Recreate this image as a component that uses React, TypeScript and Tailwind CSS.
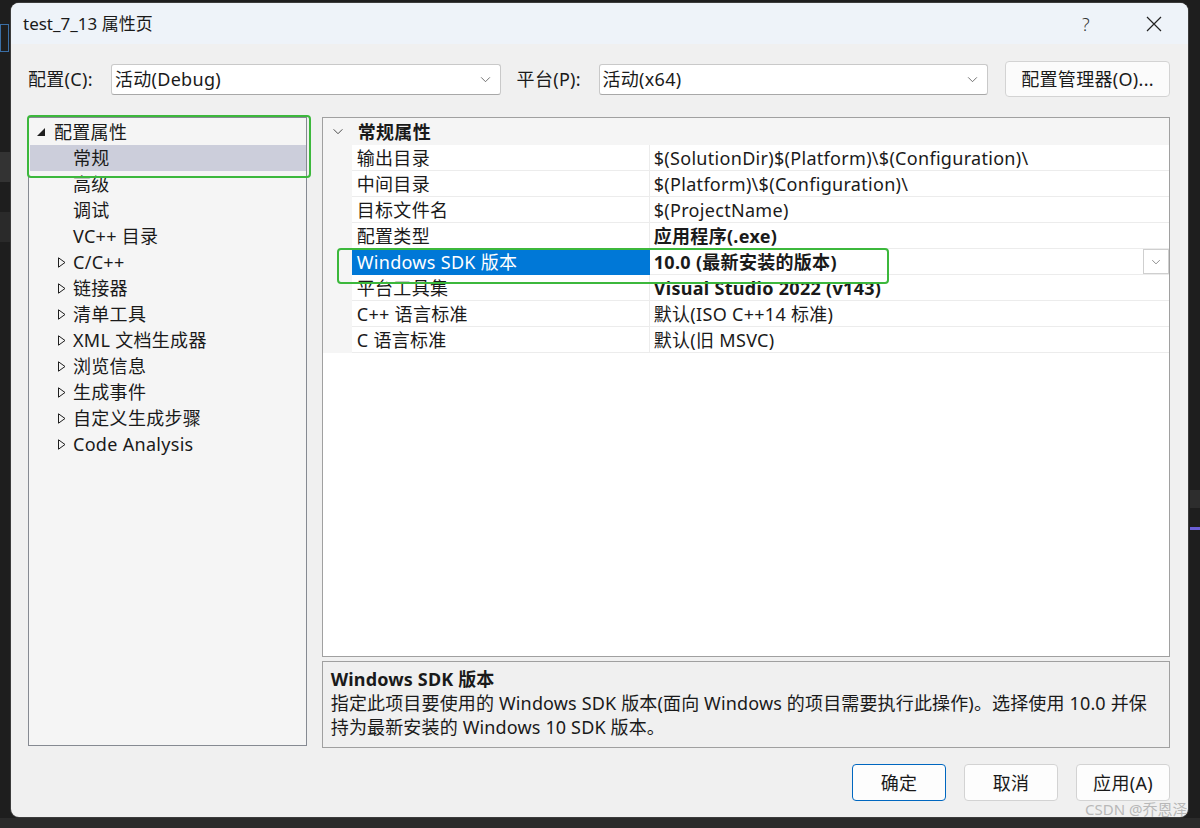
import React from "react";

type TreeItem = {
  label: string;
  kind: "root" | "leaf" | "group";
  selected?: boolean;
};

const tree: TreeItem[] = [
  { label: "配置属性", kind: "root" },
  { label: "常规", kind: "leaf", selected: true },
  { label: "高级", kind: "leaf" },
  { label: "调试", kind: "leaf" },
  { label: "VC++ 目录", kind: "leaf" },
  { label: "C/C++", kind: "group" },
  { label: "链接器", kind: "group" },
  { label: "清单工具", kind: "group" },
  { label: "XML 文档生成器", kind: "group" },
  { label: "浏览信息", kind: "group" },
  { label: "生成事件", kind: "group" },
  { label: "自定义生成步骤", kind: "group" },
  { label: "Code Analysis", kind: "group" },
];

type Prop = { name: string; value: string; bold?: boolean; selected?: boolean };

const props: Prop[] = [
  { name: "输出目录", value: "$(SolutionDir)$(Platform)\\$(Configuration)\\" },
  { name: "中间目录", value: "$(Platform)\\$(Configuration)\\" },
  { name: "目标文件名", value: "$(ProjectName)" },
  { name: "配置类型", value: "应用程序(.exe)", bold: true },
  { name: "Windows SDK 版本", value: "10.0 (最新安装的版本)", bold: true, selected: true },
  { name: "平台工具集", value: "Visual Studio 2022 (v143)", bold: true },
  { name: "C++ 语言标准", value: "默认(ISO C++14 标准)" },
  { name: "C 语言标准", value: "默认(旧 MSVC)" },
];

function Chevron({ className }: { className?: string }) {
  return (
    <svg viewBox="0 0 12 8" className={className} fill="none" stroke="currentColor" strokeWidth="1">
      <path d="M1 1.5 L6 6.5 L11 1.5" />
    </svg>
  );
}

function Select({ value }: { value: string }) {
  return (
    <div className="flex h-[31px] w-[390px] items-center justify-between rounded-[3px] border border-[#c9c9c9] border-b-[#a8a8a8] bg-white pl-[3px] pr-[9px]">
      <span>{value}</span>
      <Chevron className="h-[7px] w-[11px] text-[#5f5f5f]" />
    </div>
  );
}

function Button({ label, primary }: { label: string; primary?: boolean }) {
  return (
    <div
      className={
        "flex h-[37px] w-[94px] items-center justify-center rounded-[4px] border bg-[#fdfdfd] " +
        (primary ? "border-[#0067c0]" : "border-[#d3d3d3]")
      }
    >
      {label}
    </div>
  );
}

function TreeRow({ item }: { item: TreeItem }) {
  if (item.kind === "root") {
    return (
      <div className="flex h-[26px] items-center pl-[8px]">
        <svg viewBox="0 0 8 8" className="mr-[9px] h-[8px] w-[8px]">
          <path d="M8 0 L8 8 L0 8 Z" fill="#1e1e1e" />
        </svg>
        <span>{item.label}</span>
      </div>
    );
  }
  return (
    <div
      className={
        "ml-[1px] flex h-[26px] items-center pl-[28px] " + (item.selected ? "bg-[#cccedb]" : "")
      }
    >
      <span className="flex w-[15px] items-center">
        {item.kind === "group" && (
          <svg viewBox="0 0 8 11" className="h-[11px] w-[8px]">
            <path d="M0.5 0.8 L7 5.5 L0.5 10.2 Z" fill="none" stroke="#1e1e1e" strokeWidth="1" />
          </svg>
        )}
      </span>
      <span>{item.label}</span>
    </div>
  );
}

function PropRow({ p }: { p: Prop }) {
  return (
    <div className="flex h-[26px]">
      <div className="w-[29px] bg-[#f5f5f5]" />
      <div
        className={
          "flex w-[298px] items-center border-b border-r pl-[5px] " +
          (p.selected ? "border-[#0078d7] bg-[#0078d7] text-white" : "border-[#ececec] bg-white")
        }
      >
        {p.name}
      </div>
      <div className="flex flex-1 items-center justify-between border-b border-[#ececec] bg-white pl-[4px]">
        <span className={p.bold ? "font-bold" : ""}>{p.value}</span>
        {p.selected && (
          <div className="flex h-[25px] w-[26px] items-center justify-center border border-[#cfcfcf] bg-white">
            <Chevron className="h-[6px] w-[10px] text-[#6a6a6a]" />
          </div>
        )}
      </div>
    </div>
  );
}

export default function App() {
  return (
    <div className="relative h-[828px] w-[1200px] overflow-hidden bg-[#1e1e1e] font-['Noto_Sans','Noto_Sans_CJK_SC',sans-serif] text-[18px] leading-none tracking-[0.3px] text-[#1a1a1a]">
      {/* editor background peeking out */}
      <div className="absolute left-0 top-[24px] h-[28px] w-[9px] border border-[#3a6ea5]" />
      <div className="absolute left-0 top-[152px] h-[30px] w-[10px] bg-[#333333]" />
      <div className="absolute left-0 top-[212px] h-[30px] w-[10px] bg-[#2a2a2a]" />
      <div className="absolute right-0 top-[490px] h-[18px] w-[10px] bg-[#2d2d2d]" />
      <div className="absolute right-0 top-[527px] h-[3px] w-[10px] bg-[#6b5fd6]" />
      <div className="absolute bottom-0 left-0 h-[10px] w-full bg-[#2b2b2b]" />

      <div className="relative pl-[11px] pt-[3px]">
        <div className="flex h-[814px] w-[1177px] flex-col overflow-hidden rounded-[8px] bg-[#f0f0f0] shadow-[0_0_0_1px_#3c3c3c]">
          {/* title bar */}
          <div className="flex h-[41px] items-center justify-between bg-[#eef3f9] pl-[12px]">
            <span className="text-[17px] tracking-normal">test_7_13 属性页</span>
            <div className="flex items-center">
              <span className="mr-[56px] text-[18px] font-light text-[#333]">?</span>
              <svg viewBox="0 0 16 16" className="mr-[26px] h-[16px] w-[16px]" stroke="#222" strokeWidth="1.2">
                <path d="M1 1 L15 15 M15 1 L1 15" />
              </svg>
            </div>
          </div>

          {/* body */}
          <div className="flex flex-1 flex-col pl-[17px] pr-[18px] pt-[17px]">
            {/* configuration row */}
            <div className="flex h-[36px] items-center">
              <span className="w-[83px]">配置(C):</span>
              <Select value="活动(Debug)" />
              <span className="ml-[16px] w-[82px]">平台(P):</span>
              <Select value="活动(x64)" />
              <div className="ml-[17px] flex h-[36px] w-[165px] items-center justify-center rounded-[4px] border border-[#d3d3d3] bg-[#fbfbfb]">
                配置管理器(O)...
              </div>
            </div>

            {/* main area */}
            <div className="mt-[20px] flex gap-[15px]">
              <div className="relative h-[629px] w-[279px] border border-[#868a92] bg-[#f5f5f5] pt-[1px]">
                {tree.map((t) => (
                  <TreeRow key={t.label} item={t} />
                ))}
              </div>

              <div className="flex w-[849px] flex-col">
                <div className="h-[540px] border border-[#a0a0a0] bg-white">
                  <div className="flex h-[27px] items-center bg-[#f5f5f5]">
                    <Chevron className="ml-[9px] h-[7px] w-[12px] text-[#333]" />
                    <span className="ml-[14px] font-bold">常规属性</span>
                  </div>
                  {props.map((p) => (
                    <PropRow key={p.name} p={p} />
                  ))}
                </div>

                <div className="mt-[4px] h-[87px] border border-[#a0a0a0] bg-[#f0f0f0] px-[8px] pt-[5px] leading-[24px] tracking-[0.15px]">
                  <div className="font-bold">Windows SDK 版本</div>
                  <div className="whitespace-nowrap">
                    指定此项目要使用的 Windows SDK 版本(面向 Windows 的项目需要执行此操作)。选择使用 10.0 并保
                    <br />
                    持为最新安装的 Windows 10 SDK 版本。
                  </div>
                </div>
              </div>
            </div>

            {/* buttons */}
            <div className="mt-[16px] flex justify-end gap-[18px]">
              <Button label="确定" primary />
              <Button label="取消" />
              <Button label="应用(A)" />
            </div>
          </div>
        </div>
      </div>

      {/* annotation boxes */}
      <div className="absolute left-[27px] top-[115px] h-[63px] w-[284px] rounded-[4px] border-2 border-[#3cb83c]" />
      <div className="absolute left-[337px] top-[248px] h-[36px] w-[552px] rounded-[4px] border-2 border-[#3cb83c]" />

      {/* watermark */}
      <div className="absolute left-[1085px] top-[802px] text-[15px] tracking-normal text-[#b8b8b8]">CSDN @乔恩泽</div>
    </div>
  );
}
